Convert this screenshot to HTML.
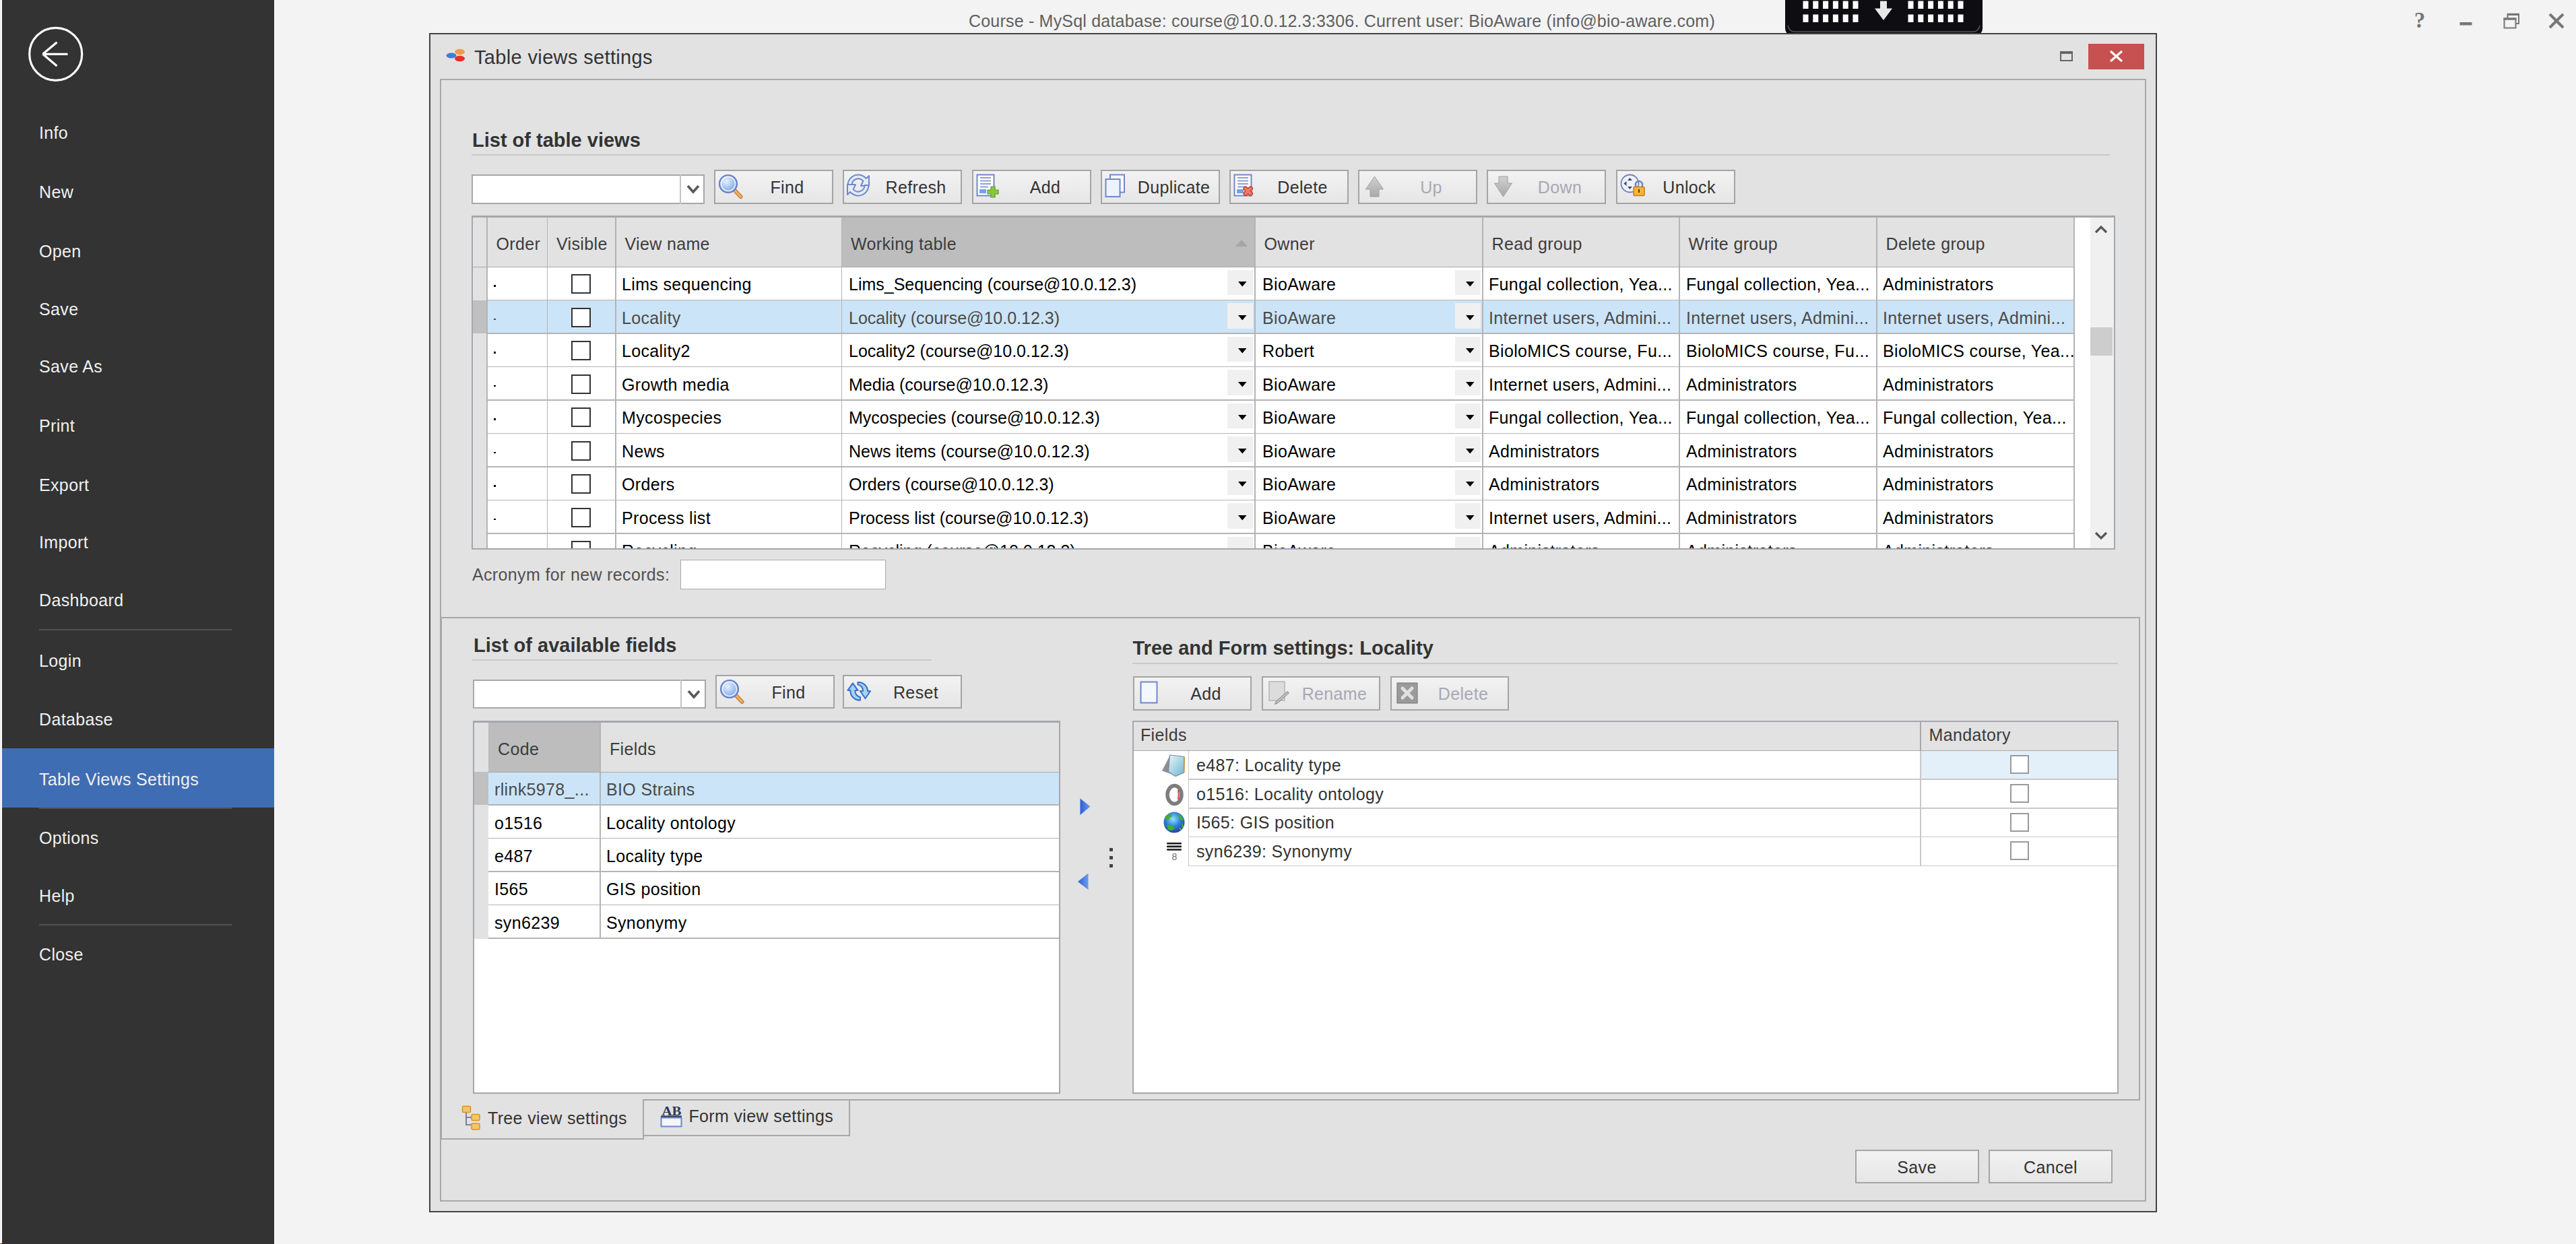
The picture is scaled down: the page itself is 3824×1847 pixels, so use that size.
<!DOCTYPE html><html><head><meta charset="utf-8"><style>
html,body{margin:0;padding:0;}
body{width:3824px;height:1847px;position:relative;overflow:hidden;background:#f3f3f3;font-family:"Liberation Sans", sans-serif;}
.t{position:absolute;white-space:nowrap;line-height:1;font-family:"Liberation Sans", sans-serif;letter-spacing:0.35px;}
</style></head><body>
<div style="position:absolute;left:3px;top:0px;width:404px;height:1847px;background:#333333"></div>
<svg style="position:absolute;left:38px;top:36px" width="90" height="90" viewBox="0 0 90 90"><circle cx="44.7" cy="44.3" r="39" fill="none" stroke="#fff" stroke-width="3.2"/><path d="M25.5 44.3 H62.5 M25.5 44.3 L46.5 26.7 M25.5 44.3 L46.5 61.9" fill="none" stroke="#fff" stroke-width="3.2" stroke-linecap="butt"/></svg>
<div style="position:absolute;left:3px;top:1111px;width:404px;height:88px;background:#3f6db4"></div>
<div class="t" style="left:58px;top:184.75px;font-size:25px;color:#f0f0f0;font-weight:normal;">Info</div>
<div class="t" style="left:58px;top:272.75px;font-size:25px;color:#f0f0f0;font-weight:normal;">New</div>
<div class="t" style="left:58px;top:360.75px;font-size:25px;color:#f0f0f0;font-weight:normal;">Open</div>
<div class="t" style="left:58px;top:446.75px;font-size:25px;color:#f0f0f0;font-weight:normal;">Save</div>
<div class="t" style="left:58px;top:531.75px;font-size:25px;color:#f0f0f0;font-weight:normal;">Save As</div>
<div class="t" style="left:58px;top:619.75px;font-size:25px;color:#f0f0f0;font-weight:normal;">Print</div>
<div class="t" style="left:58px;top:707.75px;font-size:25px;color:#f0f0f0;font-weight:normal;">Export</div>
<div class="t" style="left:58px;top:792.75px;font-size:25px;color:#f0f0f0;font-weight:normal;">Import</div>
<div class="t" style="left:58px;top:878.75px;font-size:25px;color:#f0f0f0;font-weight:normal;">Dashboard</div>
<div class="t" style="left:58px;top:968.75px;font-size:25px;color:#f0f0f0;font-weight:normal;">Login</div>
<div class="t" style="left:58px;top:1055.75px;font-size:25px;color:#f0f0f0;font-weight:normal;">Database</div>
<div class="t" style="left:58px;top:1144.75px;font-size:25px;color:#f0f0f0;font-weight:normal;">Table Views Settings</div>
<div class="t" style="left:58px;top:1231.75px;font-size:25px;color:#f0f0f0;font-weight:normal;">Options</div>
<div class="t" style="left:58px;top:1317.75px;font-size:25px;color:#f0f0f0;font-weight:normal;">Help</div>
<div class="t" style="left:58px;top:1404.75px;font-size:25px;color:#f0f0f0;font-weight:normal;">Close</div>
<div style="position:absolute;left:58px;top:934px;width:286px;height:2px;background:#505050"></div>
<div style="position:absolute;left:58px;top:1199px;width:286px;height:2px;background:#505050"></div>
<div style="position:absolute;left:58px;top:1372px;width:286px;height:2px;background:#505050"></div>
<div class="t" style="left:1438px;top:18.75px;font-size:25px;color:#606060;font-weight:normal;letter-spacing:0.2px">Course - MySql database: course@10.0.12.3:3306. Current user: BioAware (info@bio-aware.com)</div>
<svg style="position:absolute;left:2650px;top:0px" width="293" height="51" viewBox="0 0 293 51"><path d="M0 0 H293 V42 Q293 51 284 51 H9 Q0 51 0 42 Z" fill="#0e0e12"/><path d="M4 38 Q6 47 14 47 H279 Q287 47 289 38" fill="none" stroke="#55555c" stroke-width="1.5"/><rect x="26.5" y="1.5" width="8" height="11.5" fill="#fff"/><rect x="182.5" y="1.5" width="8" height="11.5" fill="#fff"/><rect x="41.3" y="1.5" width="8" height="11.5" fill="#fff"/><rect x="197.3" y="1.5" width="8" height="11.5" fill="#fff"/><rect x="56.1" y="1.5" width="8" height="11.5" fill="#fff"/><rect x="212.1" y="1.5" width="8" height="11.5" fill="#fff"/><rect x="70.9" y="1.5" width="8" height="11.5" fill="#fff"/><rect x="226.9" y="1.5" width="8" height="11.5" fill="#fff"/><rect x="85.7" y="1.5" width="8" height="11.5" fill="#fff"/><rect x="241.7" y="1.5" width="8" height="11.5" fill="#fff"/><rect x="100.5" y="1.5" width="8" height="11.5" fill="#fff"/><rect x="256.5" y="1.5" width="8" height="11.5" fill="#fff"/><rect x="26.5" y="21.5" width="8" height="11.5" fill="#fff"/><rect x="182.5" y="21.5" width="8" height="11.5" fill="#fff"/><rect x="41.3" y="21.5" width="8" height="11.5" fill="#fff"/><rect x="197.3" y="21.5" width="8" height="11.5" fill="#fff"/><rect x="56.1" y="21.5" width="8" height="11.5" fill="#fff"/><rect x="212.1" y="21.5" width="8" height="11.5" fill="#fff"/><rect x="70.9" y="21.5" width="8" height="11.5" fill="#fff"/><rect x="226.9" y="21.5" width="8" height="11.5" fill="#fff"/><rect x="85.7" y="21.5" width="8" height="11.5" fill="#fff"/><rect x="241.7" y="21.5" width="8" height="11.5" fill="#fff"/><rect x="100.5" y="21.5" width="8" height="11.5" fill="#fff"/><rect x="256.5" y="21.5" width="8" height="11.5" fill="#fff"/><path d="M141 1.5 H151 V12.5 H159 L146 30 L133 12.5 H141 Z" fill="#e8e8e8"/></svg>
<svg style="position:absolute;left:3578px;top:14px" width="240" height="34" viewBox="0 0 240 34"><text x="14" y="27" font-family="Liberation Serif" font-weight="bold" font-size="33" fill="#777" text-anchor="middle">?</text><rect x="73.5" y="19" width="18" height="4.5" fill="#777"/><rect x="144.5" y="7" width="16.5" height="14" fill="none" stroke="#777" stroke-width="2"/><rect x="144" y="5.8" width="17.5" height="3.2" fill="#777"/><rect x="139.5" y="13.5" width="17" height="14" fill="#f3f3f3" stroke="#777" stroke-width="2"/><rect x="138.5" y="12.5" width="19" height="3.2" fill="#777"/><path d="M207 7 L227 27 M227 7 L207 27" stroke="#777" stroke-width="4"/></svg>
<div style="position:absolute;left:636.5px;top:49px;width:2565.0px;height:1750.5px;background:#e2e2e2;border:2px solid #444;box-sizing:border-box"></div>
<svg style="position:absolute;left:660px;top:71px" width="34" height="24" viewBox="0 0 34 24"><ellipse cx="10" cy="11.5" rx="7.5" ry="4" fill="#3d7fd6"/><ellipse cx="22.5" cy="6" rx="7.5" ry="4.2" fill="#f39a4a"/><ellipse cx="22.5" cy="16" rx="7.5" ry="4.2" fill="#ee2a2a"/></svg>
<div class="t" style="left:704px;top:71.35px;font-size:29px;color:#333;font-weight:normal;">Table views settings</div>
<div style="position:absolute;left:3058px;top:76px;width:19px;height:15px;border:2px solid #666;border-top-width:4px;box-sizing:border-box"></div>
<div style="position:absolute;left:3100px;top:65px;width:83px;height:38px;background:#c75050"></div>
<svg style="position:absolute;left:3131px;top:74px" width="21" height="19" viewBox="0 0 21 19"><path d="M2 2 L19 17 M19 2 L2 17" stroke="#fff" stroke-width="3.2"/></svg>
<div style="position:absolute;left:652.5px;top:116.5px;width:2533.0px;height:1667.0px;border:2px solid #a8a8a8;box-sizing:border-box"></div>
<div class="t" style="left:701px;top:193.85px;font-size:29px;color:#333;font-weight:bold;letter-spacing:0px">List of table views</div>
<div style="position:absolute;left:700px;top:229px;width:2432px;height:2px;background:#c8c8c8"></div>
<div style="position:absolute;left:700px;top:259px;width:346px;height:44px;background:#fff;border:2px solid #a8a8a8;box-sizing:border-box"></div>
<div style="position:absolute;left:1009px;top:259px;width:1.5px;height:44px;background:#c4c4c4"></div>
<svg style="position:absolute;left:1018.5px;top:273.0px" width="20" height="16" viewBox="0 0 20 16"><path d="M2 3 L10 12 L18 3" fill="none" stroke="#5a5a5a" stroke-width="3.6"/></svg>
<div style="position:absolute;left:1060px;top:252px;width:177px;height:51px;background:linear-gradient(#f2f2f2,#e6e6e6);border:2px solid #a4a4a4;box-sizing:border-box"></div>
<svg style="position:absolute;left:1066px;top:258px" width="38" height="38" viewBox="0 0 38 38"><defs><radialGradient id="lg" cx="0.4" cy="0.35" r="0.7"><stop offset="0" stop-color="#e8f0ff"/><stop offset="1" stop-color="#6f9de6"/></radialGradient></defs><line x1="25" y1="25" x2="33.5" y2="34" stroke="#c9803a" stroke-width="6" stroke-linecap="round"/><line x1="25" y1="25" x2="33.5" y2="34" stroke="#f2b15e" stroke-width="3" stroke-linecap="round"/><circle cx="15" cy="15" r="13" fill="url(#lg)" stroke="#6b82c2" stroke-width="2.2"/><circle cx="15" cy="15" r="10.5" fill="none" stroke="#fff" stroke-width="1.6" opacity="0.8"/></svg>
<div class="t" style="left:668.5px;width:1000px;text-align:center;top:266.05px;font-size:25px;color:#333;font-weight:normal;">Find</div>
<div style="position:absolute;left:1251px;top:252px;width:177px;height:51px;background:linear-gradient(#f2f2f2,#e6e6e6);border:2px solid #a4a4a4;box-sizing:border-box"></div>
<svg style="position:absolute;left:1257px;top:258px" width="38" height="38" viewBox="0 0 38 38"><path d="M1.5 17 A15.5 15.5 0 0 1 28.9 7 L33 3 V18 H21 L24.3 10.9 A9.5 9.5 0 0 0 7.5 17 Z" fill="#e3ecf9" stroke="#7189c9" stroke-width="2" stroke-linejoin="round"/><path d="M32.5 17 A15.5 15.5 0 0 1 5.1 27 L1 31 V16 H13 L9.7 23.1 A9.5 9.5 0 0 0 26.5 17 Z" fill="#e3ecf9" stroke="#7189c9" stroke-width="2" stroke-linejoin="round"/></svg>
<div class="t" style="left:859.5px;width:1000px;text-align:center;top:266.05px;font-size:25px;color:#333;font-weight:normal;">Refresh</div>
<div style="position:absolute;left:1443px;top:252px;width:177px;height:51px;background:linear-gradient(#f2f2f2,#e6e6e6);border:2px solid #a4a4a4;box-sizing:border-box"></div>
<svg style="position:absolute;left:1449px;top:258px" width="38" height="38" viewBox="0 0 38 38"><rect x="1.5" y="1.5" width="25" height="31" fill="#fff" stroke="#7088c8" stroke-width="2"/><g stroke="#8da0d4" stroke-width="2"><line x1="6" y1="6" x2="22" y2="6"/><line x1="6" y1="10.5" x2="22" y2="10.5"/><line x1="6" y1="15" x2="22" y2="15"/><line x1="6" y1="19.5" x2="18" y2="19.5"/></g><rect x="5" y="23" width="10" height="6" fill="#6fa3e0"/><path d="M22 19 H28 V24 H33 V30 H28 V35 H22 V30 H17 V24 H22 Z" fill="#8cc63f" stroke="#5f9a2a" stroke-width="1.2"/></svg>
<div class="t" style="left:1051.5px;width:1000px;text-align:center;top:266.05px;font-size:25px;color:#333;font-weight:normal;">Add</div>
<div style="position:absolute;left:1634px;top:252px;width:177px;height:51px;background:linear-gradient(#f2f2f2,#e6e6e6);border:2px solid #a4a4a4;box-sizing:border-box"></div>
<svg style="position:absolute;left:1640px;top:258px" width="38" height="38" viewBox="0 0 38 38"><rect x="8" y="1.5" width="21" height="26" fill="#fff" stroke="#7088c8" stroke-width="2"/><rect x="1.5" y="8" width="21" height="26" fill="#eef3fb" stroke="#7088c8" stroke-width="2"/></svg>
<div class="t" style="left:1242.5px;width:1000px;text-align:center;top:266.05px;font-size:25px;color:#333;font-weight:normal;">Duplicate</div>
<div style="position:absolute;left:1825px;top:252px;width:177px;height:51px;background:linear-gradient(#f2f2f2,#e6e6e6);border:2px solid #a4a4a4;box-sizing:border-box"></div>
<svg style="position:absolute;left:1831px;top:258px" width="38" height="38" viewBox="0 0 38 38"><rect x="1.5" y="1.5" width="25" height="31" fill="#fff" stroke="#7088c8" stroke-width="2"/><g stroke="#8da0d4" stroke-width="2"><line x1="6" y1="6" x2="22" y2="6"/><line x1="6" y1="10.5" x2="22" y2="10.5"/><line x1="6" y1="15" x2="22" y2="15"/><line x1="6" y1="19.5" x2="18" y2="19.5"/></g><rect x="5" y="23" width="10" height="6" fill="#6fa3e0"/><path d="M18 22 L25.5 29.5 M25.5 22 L18 29.5" stroke="#c83c2c" stroke-width="7" stroke-linecap="round"/><path d="M18 22 L25.5 29.5 M25.5 22 L18 29.5" stroke="#f07a66" stroke-width="4" stroke-linecap="round"/></svg>
<div class="t" style="left:1433.5px;width:1000px;text-align:center;top:266.05px;font-size:25px;color:#333;font-weight:normal;">Delete</div>
<div style="position:absolute;left:2016px;top:252px;width:177px;height:51px;background:linear-gradient(#f2f2f2,#e6e6e6);border:2px solid #a4a4a4;box-sizing:border-box"></div>
<svg style="position:absolute;left:2027px;top:260.5px" width="38" height="38" viewBox="0 0 38 38"><defs><linearGradient id="gu" x1="0" x2="0" y1="0" y2="1"><stop offset="0" stop-color="#d0d0d0"/><stop offset="1" stop-color="#a9a9a9"/></linearGradient></defs><path d="M13.5 1 L26.5 20 H20 V31 H7 V20 H0.5 Z" fill="url(#gu)" stroke="#a0a0a0" stroke-width="1"/></svg>
<div class="t" style="left:1624.5px;width:1000px;text-align:center;top:266.05px;font-size:25px;color:#a8a8b4;font-weight:normal;">Up</div>
<div style="position:absolute;left:2207px;top:252px;width:177px;height:51px;background:linear-gradient(#f2f2f2,#e6e6e6);border:2px solid #a4a4a4;box-sizing:border-box"></div>
<svg style="position:absolute;left:2218px;top:260.5px" width="38" height="38" viewBox="0 0 38 38"><path d="M7 1 H20 V11 H26.5 L13.5 31 L0.5 11 H7 Z" fill="url(#gu)" stroke="#a0a0a0" stroke-width="1"/></svg>
<div class="t" style="left:1815.5px;width:1000px;text-align:center;top:266.05px;font-size:25px;color:#a8a8b4;font-weight:normal;">Down</div>
<div style="position:absolute;left:2399px;top:252px;width:177px;height:51px;background:linear-gradient(#f2f2f2,#e6e6e6);border:2px solid #a4a4a4;box-sizing:border-box"></div>
<svg style="position:absolute;left:2405px;top:258px" width="38" height="38" viewBox="0 0 38 38"><circle cx="14.5" cy="14.5" r="13" fill="#eef1f8" stroke="#6d82c0" stroke-width="1.8"/><path d="M14.5 6 L11 10 H18 Z M14.5 23 L11 19 H18 Z M5.5 14.5 L9.5 11 V18 Z" fill="#3b4a6a"/><path d="M23 20 V16 A5 5 0 0 1 33 16 V20" fill="none" stroke="#6d82c0" stroke-width="2.5"/><rect x="20" y="19.5" width="16" height="13" rx="1.5" fill="#f5b536" stroke="#c97a1a" stroke-width="1.5"/><rect x="27" y="23" width="2" height="5" fill="#5a3a10"/></svg>
<div class="t" style="left:2007.5px;width:1000px;text-align:center;top:266.05px;font-size:25px;color:#333;font-weight:normal;">Unlock</div>
<div style="position:absolute;left:700px;top:320px;width:2440px;height:496px;background:#fff"></div>
<div style="position:absolute;left:702px;top:323px;width:2376.5px;height:73px;background:#e2e2e2"></div>
<div style="position:absolute;left:1249.5px;top:323px;width:613.5px;height:73px;background:#bdbdbd"></div>
<div style="position:absolute;left:702px;top:396px;width:21px;height:418px;background:#e2e2e2"></div>
<div style="position:absolute;left:3102.5px;top:323px;width:35.5px;height:491px;background:#f0f0f0"></div>
<svg style="position:absolute;left:3107px;top:330px" width="24" height="20" viewBox="0 0 24 20"><path d="M4 15 L12 7 L20 15" fill="none" stroke="#555" stroke-width="3.2"/></svg>
<svg style="position:absolute;left:3107px;top:786px" width="24" height="20" viewBox="0 0 24 20"><path d="M4 5 L12 13 L20 5" fill="none" stroke="#555" stroke-width="3.2"/></svg>
<div style="position:absolute;left:3103px;top:485.5px;width:33px;height:42.5px;background:#cdcdcd"></div>
<div class="t" style="left:736.5px;top:349.75px;font-size:25px;color:#3c3c3c;font-weight:normal;">Order</div>
<div class="t" style="left:826.0px;top:349.75px;font-size:25px;color:#3c3c3c;font-weight:normal;">Visible</div>
<div class="t" style="left:927.5px;top:349.75px;font-size:25px;color:#3c3c3c;font-weight:normal;">View name</div>
<div class="t" style="left:1263.0px;top:349.75px;font-size:25px;color:#3c3c3c;font-weight:normal;">Working table</div>
<div class="t" style="left:1876.5px;top:349.75px;font-size:25px;color:#3c3c3c;font-weight:normal;">Owner</div>
<div class="t" style="left:2214.5px;top:349.75px;font-size:25px;color:#3c3c3c;font-weight:normal;">Read group</div>
<div class="t" style="left:2506.5px;top:349.75px;font-size:25px;color:#3c3c3c;font-weight:normal;">Write group</div>
<div class="t" style="left:2799.5px;top:349.75px;font-size:25px;color:#3c3c3c;font-weight:normal;">Delete group</div>
<svg style="position:absolute;left:1832px;top:354px" width="24" height="14" viewBox="0 0 24 14"><path d="M2 12 L11 2 L20 12 Z" fill="#a5a5a5"/></svg>
<div style="position:absolute;left:702px;top:396px;width:2400px;height:418px;overflow:hidden">
<div style="position:absolute;left:31px;top:27.0px;width:2.5px;height:2.5px;background:#000"></div>
<div style="position:absolute;left:146px;top:11.0px;width:29px;height:29.0px;border:2px solid #333;background:#fff;box-sizing:border-box"></div>
<div class="t" style="left:221px;top:14.25px;font-size:25px;color:#000">Lims sequencing</div>
<div class="t" style="left:558px;top:14.25px;font-size:25px;color:#000;letter-spacing:0px">Lims_Sequencing (course@10.0.12.3)</div>
<div class="t" style="left:1172px;top:14.25px;font-size:25px;color:#000">BioAware</div>
<div class="t" style="left:1508px;top:14.25px;font-size:25px;color:#000">Fungal collection, Yea...</div>
<div class="t" style="left:1801px;top:14.25px;font-size:25px;color:#000">Fungal collection, Yea...</div>
<div class="t" style="left:2093px;top:14.25px;font-size:25px;color:#000">Administrators</div>
<div style="position:absolute;left:1120px;top:4.5px;width:38px;height:37.5px;background:#f0f0f0"></div>
<svg style="position:absolute;left:1135.5px;top:22.0px" width="13" height="8"><path d="M0 0 H12.5 L6.25 7.5 Z" fill="#000"/></svg>
<div style="position:absolute;left:1458px;top:4.5px;width:38px;height:37.5px;background:#f0f0f0"></div>
<svg style="position:absolute;left:1473.5px;top:22.0px" width="13" height="8"><path d="M0 0 H12.5 L6.25 7.5 Z" fill="#000"/></svg>
<div style="position:absolute;left:21px;top:48.5px;width:2355.5px;height:1.5px;background:#b4b4b4"></div>
<div style="position:absolute;left:21px;top:49.5px;width:2355.5px;height:49.5px;background:#cce4f7"></div>
<div style="position:absolute;left:0px;top:49.5px;width:21px;height:49.5px;background:#c0c0c0"></div>
<div style="position:absolute;left:31px;top:76.5px;width:2.5px;height:2.5px;background:#4a4a4a"></div>
<div style="position:absolute;left:146px;top:60.5px;width:29px;height:29.0px;border:2px solid #333;background:#fff;box-sizing:border-box"></div>
<div class="t" style="left:221px;top:63.75px;font-size:25px;color:#4a4a4a">Locality</div>
<div class="t" style="left:558px;top:63.75px;font-size:25px;color:#4a4a4a;letter-spacing:0px">Locality (course@10.0.12.3)</div>
<div class="t" style="left:1172px;top:63.75px;font-size:25px;color:#4a4a4a">BioAware</div>
<div class="t" style="left:1508px;top:63.75px;font-size:25px;color:#4a4a4a">Internet users, Admini...</div>
<div class="t" style="left:1801px;top:63.75px;font-size:25px;color:#4a4a4a">Internet users, Admini...</div>
<div class="t" style="left:2093px;top:63.75px;font-size:25px;color:#4a4a4a">Internet users, Admini...</div>
<div style="position:absolute;left:1120px;top:54.0px;width:38px;height:37.5px;background:#f0f0f0"></div>
<svg style="position:absolute;left:1135.5px;top:71.5px" width="13" height="8"><path d="M0 0 H12.5 L6.25 7.5 Z" fill="#000"/></svg>
<div style="position:absolute;left:1458px;top:54.0px;width:38px;height:37.5px;background:#f0f0f0"></div>
<svg style="position:absolute;left:1473.5px;top:71.5px" width="13" height="8"><path d="M0 0 H12.5 L6.25 7.5 Z" fill="#000"/></svg>
<div style="position:absolute;left:21px;top:98.0px;width:2355.5px;height:1.5px;background:#b4b4b4"></div>
<div style="position:absolute;left:31px;top:126.0px;width:2.5px;height:2.5px;background:#000"></div>
<div style="position:absolute;left:146px;top:110.0px;width:29px;height:29.0px;border:2px solid #333;background:#fff;box-sizing:border-box"></div>
<div class="t" style="left:221px;top:113.25px;font-size:25px;color:#000">Locality2</div>
<div class="t" style="left:558px;top:113.25px;font-size:25px;color:#000;letter-spacing:0px">Locality2 (course@10.0.12.3)</div>
<div class="t" style="left:1172px;top:113.25px;font-size:25px;color:#000">Robert</div>
<div class="t" style="left:1508px;top:113.25px;font-size:25px;color:#000">BioloMICS course, Fu...</div>
<div class="t" style="left:1801px;top:113.25px;font-size:25px;color:#000">BioloMICS course, Fu...</div>
<div class="t" style="left:2093px;top:113.25px;font-size:25px;color:#000">BioloMICS course, Yea...</div>
<div style="position:absolute;left:1120px;top:103.5px;width:38px;height:37.5px;background:#f0f0f0"></div>
<svg style="position:absolute;left:1135.5px;top:121.0px" width="13" height="8"><path d="M0 0 H12.5 L6.25 7.5 Z" fill="#000"/></svg>
<div style="position:absolute;left:1458px;top:103.5px;width:38px;height:37.5px;background:#f0f0f0"></div>
<svg style="position:absolute;left:1473.5px;top:121.0px" width="13" height="8"><path d="M0 0 H12.5 L6.25 7.5 Z" fill="#000"/></svg>
<div style="position:absolute;left:21px;top:147.5px;width:2355.5px;height:1.5px;background:#b4b4b4"></div>
<div style="position:absolute;left:31px;top:175.5px;width:2.5px;height:2.5px;background:#000"></div>
<div style="position:absolute;left:146px;top:159.5px;width:29px;height:29.0px;border:2px solid #333;background:#fff;box-sizing:border-box"></div>
<div class="t" style="left:221px;top:162.75px;font-size:25px;color:#000">Growth media</div>
<div class="t" style="left:558px;top:162.75px;font-size:25px;color:#000;letter-spacing:0px">Media (course@10.0.12.3)</div>
<div class="t" style="left:1172px;top:162.75px;font-size:25px;color:#000">BioAware</div>
<div class="t" style="left:1508px;top:162.75px;font-size:25px;color:#000">Internet users, Admini...</div>
<div class="t" style="left:1801px;top:162.75px;font-size:25px;color:#000">Administrators</div>
<div class="t" style="left:2093px;top:162.75px;font-size:25px;color:#000">Administrators</div>
<div style="position:absolute;left:1120px;top:153.0px;width:38px;height:37.5px;background:#f0f0f0"></div>
<svg style="position:absolute;left:1135.5px;top:170.5px" width="13" height="8"><path d="M0 0 H12.5 L6.25 7.5 Z" fill="#000"/></svg>
<div style="position:absolute;left:1458px;top:153.0px;width:38px;height:37.5px;background:#f0f0f0"></div>
<svg style="position:absolute;left:1473.5px;top:170.5px" width="13" height="8"><path d="M0 0 H12.5 L6.25 7.5 Z" fill="#000"/></svg>
<div style="position:absolute;left:21px;top:197.0px;width:2355.5px;height:1.5px;background:#b4b4b4"></div>
<div style="position:absolute;left:31px;top:225.0px;width:2.5px;height:2.5px;background:#000"></div>
<div style="position:absolute;left:146px;top:209.0px;width:29px;height:29.0px;border:2px solid #333;background:#fff;box-sizing:border-box"></div>
<div class="t" style="left:221px;top:212.25px;font-size:25px;color:#000">Mycospecies</div>
<div class="t" style="left:558px;top:212.25px;font-size:25px;color:#000;letter-spacing:0px">Mycospecies (course@10.0.12.3)</div>
<div class="t" style="left:1172px;top:212.25px;font-size:25px;color:#000">BioAware</div>
<div class="t" style="left:1508px;top:212.25px;font-size:25px;color:#000">Fungal collection, Yea...</div>
<div class="t" style="left:1801px;top:212.25px;font-size:25px;color:#000">Fungal collection, Yea...</div>
<div class="t" style="left:2093px;top:212.25px;font-size:25px;color:#000">Fungal collection, Yea...</div>
<div style="position:absolute;left:1120px;top:202.5px;width:38px;height:37.5px;background:#f0f0f0"></div>
<svg style="position:absolute;left:1135.5px;top:220.0px" width="13" height="8"><path d="M0 0 H12.5 L6.25 7.5 Z" fill="#000"/></svg>
<div style="position:absolute;left:1458px;top:202.5px;width:38px;height:37.5px;background:#f0f0f0"></div>
<svg style="position:absolute;left:1473.5px;top:220.0px" width="13" height="8"><path d="M0 0 H12.5 L6.25 7.5 Z" fill="#000"/></svg>
<div style="position:absolute;left:21px;top:246.5px;width:2355.5px;height:1.5px;background:#b4b4b4"></div>
<div style="position:absolute;left:31px;top:274.5px;width:2.5px;height:2.5px;background:#000"></div>
<div style="position:absolute;left:146px;top:258.5px;width:29px;height:29.0px;border:2px solid #333;background:#fff;box-sizing:border-box"></div>
<div class="t" style="left:221px;top:261.75px;font-size:25px;color:#000">News</div>
<div class="t" style="left:558px;top:261.75px;font-size:25px;color:#000;letter-spacing:0px">News items (course@10.0.12.3)</div>
<div class="t" style="left:1172px;top:261.75px;font-size:25px;color:#000">BioAware</div>
<div class="t" style="left:1508px;top:261.75px;font-size:25px;color:#000">Administrators</div>
<div class="t" style="left:1801px;top:261.75px;font-size:25px;color:#000">Administrators</div>
<div class="t" style="left:2093px;top:261.75px;font-size:25px;color:#000">Administrators</div>
<div style="position:absolute;left:1120px;top:252.0px;width:38px;height:37.5px;background:#f0f0f0"></div>
<svg style="position:absolute;left:1135.5px;top:269.5px" width="13" height="8"><path d="M0 0 H12.5 L6.25 7.5 Z" fill="#000"/></svg>
<div style="position:absolute;left:1458px;top:252.0px;width:38px;height:37.5px;background:#f0f0f0"></div>
<svg style="position:absolute;left:1473.5px;top:269.5px" width="13" height="8"><path d="M0 0 H12.5 L6.25 7.5 Z" fill="#000"/></svg>
<div style="position:absolute;left:21px;top:296.0px;width:2355.5px;height:1.5px;background:#b4b4b4"></div>
<div style="position:absolute;left:31px;top:324.0px;width:2.5px;height:2.5px;background:#000"></div>
<div style="position:absolute;left:146px;top:308.0px;width:29px;height:29.0px;border:2px solid #333;background:#fff;box-sizing:border-box"></div>
<div class="t" style="left:221px;top:311.25px;font-size:25px;color:#000">Orders</div>
<div class="t" style="left:558px;top:311.25px;font-size:25px;color:#000;letter-spacing:0px">Orders (course@10.0.12.3)</div>
<div class="t" style="left:1172px;top:311.25px;font-size:25px;color:#000">BioAware</div>
<div class="t" style="left:1508px;top:311.25px;font-size:25px;color:#000">Administrators</div>
<div class="t" style="left:1801px;top:311.25px;font-size:25px;color:#000">Administrators</div>
<div class="t" style="left:2093px;top:311.25px;font-size:25px;color:#000">Administrators</div>
<div style="position:absolute;left:1120px;top:301.5px;width:38px;height:37.5px;background:#f0f0f0"></div>
<svg style="position:absolute;left:1135.5px;top:319.0px" width="13" height="8"><path d="M0 0 H12.5 L6.25 7.5 Z" fill="#000"/></svg>
<div style="position:absolute;left:1458px;top:301.5px;width:38px;height:37.5px;background:#f0f0f0"></div>
<svg style="position:absolute;left:1473.5px;top:319.0px" width="13" height="8"><path d="M0 0 H12.5 L6.25 7.5 Z" fill="#000"/></svg>
<div style="position:absolute;left:21px;top:345.5px;width:2355.5px;height:1.5px;background:#b4b4b4"></div>
<div style="position:absolute;left:31px;top:373.5px;width:2.5px;height:2.5px;background:#000"></div>
<div style="position:absolute;left:146px;top:357.5px;width:29px;height:29.0px;border:2px solid #333;background:#fff;box-sizing:border-box"></div>
<div class="t" style="left:221px;top:360.75px;font-size:25px;color:#000">Process list</div>
<div class="t" style="left:558px;top:360.75px;font-size:25px;color:#000;letter-spacing:0px">Process list (course@10.0.12.3)</div>
<div class="t" style="left:1172px;top:360.75px;font-size:25px;color:#000">BioAware</div>
<div class="t" style="left:1508px;top:360.75px;font-size:25px;color:#000">Internet users, Admini...</div>
<div class="t" style="left:1801px;top:360.75px;font-size:25px;color:#000">Administrators</div>
<div class="t" style="left:2093px;top:360.75px;font-size:25px;color:#000">Administrators</div>
<div style="position:absolute;left:1120px;top:351.0px;width:38px;height:37.5px;background:#f0f0f0"></div>
<svg style="position:absolute;left:1135.5px;top:368.5px" width="13" height="8"><path d="M0 0 H12.5 L6.25 7.5 Z" fill="#000"/></svg>
<div style="position:absolute;left:1458px;top:351.0px;width:38px;height:37.5px;background:#f0f0f0"></div>
<svg style="position:absolute;left:1473.5px;top:368.5px" width="13" height="8"><path d="M0 0 H12.5 L6.25 7.5 Z" fill="#000"/></svg>
<div style="position:absolute;left:21px;top:395.0px;width:2355.5px;height:1.5px;background:#b4b4b4"></div>
<div style="position:absolute;left:31px;top:423.0px;width:2.5px;height:2.5px;background:#000"></div>
<div style="position:absolute;left:146px;top:407.0px;width:29px;height:29.0px;border:2px solid #333;background:#fff;box-sizing:border-box"></div>
<div class="t" style="left:221px;top:410.25px;font-size:25px;color:#000">Recycling</div>
<div class="t" style="left:558px;top:410.25px;font-size:25px;color:#000;letter-spacing:0px">Recycling (course@10.0.12.3)</div>
<div class="t" style="left:1172px;top:410.25px;font-size:25px;color:#000">BioAware</div>
<div class="t" style="left:1508px;top:410.25px;font-size:25px;color:#000">Administrators</div>
<div class="t" style="left:1801px;top:410.25px;font-size:25px;color:#000">Administrators</div>
<div class="t" style="left:2093px;top:410.25px;font-size:25px;color:#000">Administrators</div>
<div style="position:absolute;left:1120px;top:400.5px;width:38px;height:37.5px;background:#f0f0f0"></div>
<svg style="position:absolute;left:1135.5px;top:418.0px" width="13" height="8"><path d="M0 0 H12.5 L6.25 7.5 Z" fill="#000"/></svg>
<div style="position:absolute;left:1458px;top:400.5px;width:38px;height:37.5px;background:#f0f0f0"></div>
<svg style="position:absolute;left:1473.5px;top:418.0px" width="13" height="8"><path d="M0 0 H12.5 L6.25 7.5 Z" fill="#000"/></svg>
<div style="position:absolute;left:21px;top:444.5px;width:2355.5px;height:1.5px;background:#b4b4b4"></div>
</div>
<div style="position:absolute;left:722.25px;top:323px;width:1.5px;height:491px;background:#b4b4b4"></div>
<div style="position:absolute;left:811.75px;top:323px;width:1.5px;height:491px;background:#b4b4b4"></div>
<div style="position:absolute;left:913.25px;top:323px;width:1.5px;height:491px;background:#b4b4b4"></div>
<div style="position:absolute;left:1248.75px;top:323px;width:1.5px;height:491px;background:#b4b4b4"></div>
<div style="position:absolute;left:1862.25px;top:323px;width:1.5px;height:491px;background:#b4b4b4"></div>
<div style="position:absolute;left:2200.25px;top:323px;width:1.5px;height:491px;background:#b4b4b4"></div>
<div style="position:absolute;left:2492.25px;top:323px;width:1.5px;height:491px;background:#b4b4b4"></div>
<div style="position:absolute;left:2785.25px;top:323px;width:1.5px;height:491px;background:#b4b4b4"></div>
<div style="position:absolute;left:3078px;top:323px;width:1.5px;height:491px;background:#b4b4b4"></div>
<div style="position:absolute;left:702px;top:395.5px;width:2376.5px;height:1.5px;background:#a8a8a8"></div>
<div style="position:absolute;left:700px;top:320px;width:2440px;height:496px;border:2px solid #a5a7ad;border-top-width:3px;box-sizing:border-box"></div>
<div class="t" style="left:701px;top:840.75px;font-size:25px;color:#505050;font-weight:normal;">Acronym for new records:</div>
<div style="position:absolute;left:1010px;top:831px;width:305px;height:44px;background:#fff;border:1.5px solid #a9a9a9;box-sizing:border-box"></div>
<div style="position:absolute;left:654px;top:915.5px;width:2522.5px;height:718.0px;border:2px solid #a8a8a8;box-sizing:border-box"></div>
<div class="t" style="left:703px;top:943.85px;font-size:29px;color:#333;font-weight:bold;letter-spacing:0px">List of available fields</div>
<div style="position:absolute;left:701px;top:978.5px;width:682px;height:2.0px;background:#c8c8c8"></div>
<div style="position:absolute;left:702px;top:1009px;width:346px;height:43px;background:#fff;border:2px solid #a8a8a8;box-sizing:border-box"></div>
<div style="position:absolute;left:1010px;top:1009px;width:1.5px;height:43px;background:#c4c4c4"></div>
<svg style="position:absolute;left:1020.0px;top:1022.5px" width="20" height="16" viewBox="0 0 20 16"><path d="M2 3 L10 12 L18 3" fill="none" stroke="#5a5a5a" stroke-width="3.6"/></svg>
<div style="position:absolute;left:1062px;top:1002px;width:177px;height:50px;background:linear-gradient(#f2f2f2,#e6e6e6);border:2px solid #a4a4a4;box-sizing:border-box"></div>
<svg style="position:absolute;left:1068px;top:1008px" width="38" height="38" viewBox="0 0 38 38"><defs><radialGradient id="lg" cx="0.4" cy="0.35" r="0.7"><stop offset="0" stop-color="#e8f0ff"/><stop offset="1" stop-color="#6f9de6"/></radialGradient></defs><line x1="25" y1="25" x2="33.5" y2="34" stroke="#c9803a" stroke-width="6" stroke-linecap="round"/><line x1="25" y1="25" x2="33.5" y2="34" stroke="#f2b15e" stroke-width="3" stroke-linecap="round"/><circle cx="15" cy="15" r="13" fill="url(#lg)" stroke="#6b82c2" stroke-width="2.2"/><circle cx="15" cy="15" r="10.5" fill="none" stroke="#fff" stroke-width="1.6" opacity="0.8"/></svg>
<div class="t" style="left:670.5px;width:1000px;text-align:center;top:1016.05px;font-size:25px;color:#333;font-weight:normal;">Find</div>
<div style="position:absolute;left:1251px;top:1002px;width:177px;height:50px;background:linear-gradient(#f2f2f2,#e6e6e6);border:2px solid #a4a4a4;box-sizing:border-box"></div>
<svg style="position:absolute;left:1257px;top:1012px" width="38" height="38" viewBox="0 0 38 38"><path d="M1.5 13 L9 2.5 L16.5 13 H12.5 A9 9 0 0 0 20 23 V27.5 A13.5 13.5 0 0 1 5.5 13 Z" fill="#a6d3f6" stroke="#3c74cc" stroke-width="2.2" stroke-linejoin="round"/><path d="M35 14 L27.5 25 L20 14 H24 A9 9 0 0 0 16.5 4.5 V1 A13.5 13.5 0 0 1 31 14 Z" fill="#a6d3f6" stroke="#3c74cc" stroke-width="2.2" stroke-linejoin="round"/></svg>
<div class="t" style="left:859.5px;width:1000px;text-align:center;top:1016.05px;font-size:25px;color:#333;font-weight:normal;">Reset</div>
<div style="position:absolute;left:702px;top:1069.5px;width:872px;height:554.0px;background:#fff;border:2px solid #a5a7ad;border-top-width:3px;box-sizing:border-box"></div>
<div style="position:absolute;left:704px;top:1072.5px;width:187px;height:73.5px;background:#bdbdbd"></div>
<div style="position:absolute;left:891px;top:1072.5px;width:681px;height:73.5px;background:#e2e2e2"></div>
<div style="position:absolute;left:704px;top:1072.5px;width:21px;height:73.5px;background:#e2e2e2"></div>
<div style="position:absolute;left:704px;top:1146px;width:21px;height:248px;background:#e2e2e2"></div>
<div class="t" style="left:739px;top:1099.75px;font-size:25px;color:#3c3c3c;font-weight:normal;">Code</div>
<div class="t" style="left:905px;top:1099.75px;font-size:25px;color:#3c3c3c;font-weight:normal;">Fields</div>
<div style="position:absolute;left:725px;top:1146.0px;width:847px;height:49.40000000000009px;background:#cce4f7"></div>
<div style="position:absolute;left:704px;top:1146.0px;width:21px;height:49.40000000000009px;background:#c0c0c0"></div>
<div class="t" style="left:734px;top:1160.25px;font-size:25px;color:#4a4a4a;font-weight:normal;">rlink5978_...</div>
<div class="t" style="left:900px;top:1160.25px;font-size:25px;color:#4a4a4a;font-weight:normal;">BIO Strains</div>
<div style="position:absolute;left:725px;top:1194.4px;width:847px;height:1.5px;background:#b4b4b4"></div>
<div class="t" style="left:734px;top:1209.65px;font-size:25px;color:#000;font-weight:normal;">o1516</div>
<div class="t" style="left:900px;top:1209.65px;font-size:25px;color:#000;font-weight:normal;">Locality ontology</div>
<div style="position:absolute;left:725px;top:1243.8000000000002px;width:847px;height:1.5px;background:#b4b4b4"></div>
<div class="t" style="left:734px;top:1259.05px;font-size:25px;color:#000;font-weight:normal;">e487</div>
<div class="t" style="left:900px;top:1259.05px;font-size:25px;color:#000;font-weight:normal;">Locality type</div>
<div style="position:absolute;left:725px;top:1293.2px;width:847px;height:1.5px;background:#b4b4b4"></div>
<div class="t" style="left:734px;top:1308.45px;font-size:25px;color:#000;font-weight:normal;">I565</div>
<div class="t" style="left:900px;top:1308.45px;font-size:25px;color:#000;font-weight:normal;">GIS position</div>
<div style="position:absolute;left:725px;top:1342.6000000000001px;width:847px;height:1.5px;background:#b4b4b4"></div>
<div class="t" style="left:734px;top:1357.85px;font-size:25px;color:#000;font-weight:normal;">syn6239</div>
<div class="t" style="left:900px;top:1357.85px;font-size:25px;color:#000;font-weight:normal;">Synonymy</div>
<div style="position:absolute;left:725px;top:1392.0px;width:847px;height:1.5px;background:#b4b4b4"></div>
<div style="position:absolute;left:890.25px;top:1072.5px;width:1.5px;height:321.5px;background:#b4b4b4"></div>
<div style="position:absolute;left:725px;top:1145.5px;width:847px;height:1.5px;background:#a8a8a8"></div>
<svg style="position:absolute;left:1600px;top:1183px" width="22" height="30" viewBox="0 0 22 30"><defs><linearGradient id="ag" x1="0" x2="1"><stop offset="0" stop-color="#2f5fd0"/><stop offset="1" stop-color="#6a9cf0"/></linearGradient></defs><path d="M3.5 2.5 L18.5 14.5 L3.5 27 Z" fill="url(#ag)"/></svg>
<svg style="position:absolute;left:1597px;top:1294px" width="22" height="30" viewBox="0 0 22 30"><path d="M18.5 2.5 L3 15 L18.5 27 Z" fill="url(#ag)"/></svg>
<div style="position:absolute;left:1646.5px;top:1259px;width:5.0px;height:5px;background:#444"></div>
<div style="position:absolute;left:1646.5px;top:1271px;width:5.0px;height:5px;background:#444"></div>
<div style="position:absolute;left:1646.5px;top:1283px;width:5.0px;height:5px;background:#444"></div>
<div class="t" style="left:1681.5px;top:948.35px;font-size:29px;color:#333;font-weight:bold;letter-spacing:0px">Tree and Form settings: Locality</div>
<div style="position:absolute;left:1681px;top:983.5px;width:1463px;height:2.0px;background:#c8c8c8"></div>
<div style="position:absolute;left:1681.5px;top:1004px;width:176.5px;height:50.5px;background:linear-gradient(#f2f2f2,#e6e6e6);border:2px solid #a4a4a4;box-sizing:border-box"></div>
<svg style="position:absolute;left:1692.0px;top:1010.5px" width="38" height="38" viewBox="0 0 38 38"><rect x="1.5" y="1.5" width="24" height="31" fill="#f4f7fd" stroke="#6f86cc" stroke-width="2"/></svg>
<div class="t" style="left:1290.0px;width:1000px;text-align:center;top:1018.05px;font-size:25px;color:#333;font-weight:normal;">Add</div>
<div style="position:absolute;left:1872.5px;top:1004px;width:176.5px;height:50.5px;background:linear-gradient(#f2f2f2,#e6e6e6);border:2px solid #a4a4a4;box-sizing:border-box"></div>
<svg style="position:absolute;left:1883.0px;top:1010.5px" width="38" height="38" viewBox="0 0 38 38"><rect x="1" y="1" width="23" height="28" fill="#dcdcdc" stroke="#b5b5b5" stroke-width="1.5"/><path d="M30 18 L13 33 L10 34 L11 31 L28 16 Z" fill="#d0d0d0" stroke="#9a9a9a" stroke-width="1.5"/></svg>
<div class="t" style="left:1481.0px;width:1000px;text-align:center;top:1018.05px;font-size:25px;color:#a8a8b4;font-weight:normal;">Rename</div>
<div style="position:absolute;left:2063.5px;top:1004px;width:176.5px;height:50.5px;background:linear-gradient(#f2f2f2,#e6e6e6);border:2px solid #a4a4a4;box-sizing:border-box"></div>
<svg style="position:absolute;left:2072.5px;top:1013px" width="38" height="38" viewBox="0 0 38 38"><rect x="1" y="1" width="30" height="30" fill="#9a9a9a" stroke="#808080" stroke-width="1.2"/><path d="M9 9 L23 23 M23 9 L9 23" stroke="#e0e0e0" stroke-width="5" stroke-linecap="round"/></svg>
<div class="t" style="left:1672.0px;width:1000px;text-align:center;top:1018.05px;font-size:25px;color:#a8a8b4;font-weight:normal;">Delete</div>
<div style="position:absolute;left:1681px;top:1069.5px;width:1464px;height:554.0px;background:#fff;border:2px solid #a5a7ad;box-sizing:border-box"></div>
<div style="position:absolute;left:1683px;top:1071.5px;width:1460px;height:43.0px;background:#e2e2e2"></div>
<div style="position:absolute;left:2850.25px;top:1071.5px;width:1.5px;height:43.0px;background:#a8a8a8"></div>
<div style="position:absolute;left:1683px;top:1113.5px;width:1460px;height:1.5px;background:#a8a8a8"></div>
<div class="t" style="left:1693px;top:1078.75px;font-size:25px;color:#3c3c3c;font-weight:normal;">Fields</div>
<div class="t" style="left:2863.5px;top:1078.75px;font-size:25px;color:#3c3c3c;font-weight:normal;">Mandatory</div>
<div style="position:absolute;left:2851px;top:1114.5px;width:292px;height:42.799999999999955px;background:#e3eff9"></div>
<div class="t" style="left:1776px;top:1123.75px;font-size:25px;color:#333;font-weight:normal;">e487: Locality type</div>
<div style="position:absolute;left:1765px;top:1156.3px;width:1378px;height:1.5px;background:#c8c8c8"></div>
<div style="position:absolute;left:2984px;top:1121.0px;width:28px;height:28.0px;border:2px solid #9a9a9a;background:#fff;box-sizing:border-box"></div>
<div class="t" style="left:1776px;top:1166.55px;font-size:25px;color:#333;font-weight:normal;">o1516: Locality ontology</div>
<div style="position:absolute;left:1765px;top:1199.1px;width:1378px;height:1.5px;background:#c8c8c8"></div>
<div style="position:absolute;left:2984px;top:1163.8px;width:28px;height:28.0px;border:2px solid #9a9a9a;background:#fff;box-sizing:border-box"></div>
<div class="t" style="left:1776px;top:1209.35px;font-size:25px;color:#333;font-weight:normal;">I565: GIS position</div>
<div style="position:absolute;left:1765px;top:1241.8999999999999px;width:1378px;height:1.5px;background:#c8c8c8"></div>
<div style="position:absolute;left:2984px;top:1206.6px;width:28px;height:28.0px;border:2px solid #9a9a9a;background:#fff;box-sizing:border-box"></div>
<div class="t" style="left:1776px;top:1252.15px;font-size:25px;color:#333;font-weight:normal;">syn6239: Synonymy</div>
<div style="position:absolute;left:1765px;top:1284.7px;width:1378px;height:1.5px;background:#c8c8c8"></div>
<div style="position:absolute;left:2984px;top:1249.4px;width:28px;height:28.0px;border:2px solid #9a9a9a;background:#fff;box-sizing:border-box"></div>
<div style="position:absolute;left:1763.75px;top:1114.5px;width:1.5px;height:171.5px;background:#c8c8c8"></div>
<div style="position:absolute;left:2850.25px;top:1114.5px;width:1.5px;height:171.5px;background:#c8c8c8"></div>
<svg style="position:absolute;left:1715px;top:1115px" width="50" height="170" viewBox="0 0 50 170"><defs><linearGradient id="np" x1="0" y1="0" x2="1" y2="1"><stop offset="0" stop-color="#e8f6fb"/><stop offset="1" stop-color="#6fb6d0"/></linearGradient><radialGradient id="gg" cx="0.45" cy="0.35" r="0.7"><stop offset="0" stop-color="#8fe4ff"/><stop offset="0.5" stop-color="#2f7fd8"/><stop offset="1" stop-color="#1a3fa0"/></radialGradient></defs><path d="M10 29.5 L21 8 L26 31 L29 36 Z" fill="#8d8f98"/><path d="M21.5 6 L43 8.5 L42.5 32 L30 37.5 L19.5 31 Z" fill="url(#np)" stroke="#7b8aa0" stroke-width="1.2"/><path d="M42 9 L44 10 L43.5 32 L41.5 33 Z" fill="#c8963a"/><ellipse cx="28.5" cy="65" rx="10.5" ry="13.5" fill="none" stroke="#7d7d7d" stroke-width="5.5"/><path d="M34 58 Q35.5 65 34 72" fill="none" stroke="#c0504d" stroke-width="2"/><circle cx="28" cy="106" r="15.5" fill="url(#gg)"/><path d="M14 98 Q19 92 25 95 Q23 101 17 103 Z M33 93 Q40 96 42 103 Q37 104 35 99 Z M17 110 Q24 108 29 114 Q26 120 19 117 Z M40 107 Q43 110 41 115 Q38 112 40 107 Z" fill="#3fae3a"/><path d="M21 100 L24 99 M36 115 L38 116" stroke="#f0b030" stroke-width="1.5"/><g fill="#1a1a1a"><rect x="17" y="136" width="22" height="2.6" rx="1"/><rect x="17" y="140.6" width="22" height="2.6" rx="1"/><rect x="17" y="145.2" width="22" height="2.6" rx="1"/></g><text x="28.5" y="162" font-family="Liberation Sans" font-size="14" fill="#707070" text-anchor="middle">8</text></svg>
<div style="position:absolute;left:654px;top:1631.5px;width:302px;height:60.0px;border:2px solid #a8a8a8;border-top:none;background:#e2e2e2;box-sizing:border-box"></div>
<div style="position:absolute;left:956px;top:1631.5px;width:305.5px;height:55.5px;border:2px solid #a8a8a8;border-left:none;border-top:none;box-sizing:border-box"></div>
<svg style="position:absolute;left:684px;top:1640px" width="32" height="42" viewBox="0 0 32 42"><path d="M8 10 V30 H17 M8 19 H17" fill="none" stroke="#5a6a90" stroke-width="1.6"/><rect x="2.5" y="2.5" width="12" height="9" rx="1.5" fill="#f7c467" stroke="#d99224" stroke-width="1.5"/><rect x="16" y="14.5" width="12" height="9" rx="1.5" fill="#f7c467" stroke="#d99224" stroke-width="1.5"/><rect x="16" y="28" width="12" height="9" rx="1.5" fill="#f7c467" stroke="#d99224" stroke-width="1.5"/></svg>
<div class="t" style="left:724px;top:1647.75px;font-size:25px;color:#333;font-weight:normal;">Tree view settings</div>
<svg style="position:absolute;left:979px;top:1640px" width="36" height="36" viewBox="0 0 36 36"><text x="18" y="15.5" font-family="Liberation Serif" font-weight="bold" font-size="19" fill="#2e3a5a" text-anchor="middle" textLength="29" lengthAdjust="spacingAndGlyphs">AB</text><rect x="2.5" y="19.5" width="30" height="13" fill="#f4f6fb" stroke="#6f86cc" stroke-width="2"/><rect x="2" y="16.5" width="31" height="2.2" fill="#2e3a5a"/></svg>
<div class="t" style="left:1022.5px;top:1645.25px;font-size:25px;color:#333;font-weight:normal;">Form view settings</div>
<div style="position:absolute;left:2754px;top:1706.5px;width:184px;height:50.0px;background:linear-gradient(#f2f2f2,#e6e6e6);border:2px solid #a4a4a4;box-sizing:border-box"></div>
<div class="t" style="left:2345.5px;width:1000px;text-align:center;top:1720.55px;font-size:25px;color:#333;font-weight:normal;">Save</div>
<div style="position:absolute;left:2952px;top:1706.5px;width:184px;height:50.0px;background:linear-gradient(#f2f2f2,#e6e6e6);border:2px solid #a4a4a4;box-sizing:border-box"></div>
<div class="t" style="left:2544px;width:1000px;text-align:center;top:1720.55px;font-size:25px;color:#333;font-weight:normal;">Cancel</div>
<div style="position:absolute;left:2px;top:0px;width:1px;height:1847px;background:#fff"></div>
<div style="position:absolute;left:0px;top:1846px;width:1px;height:1px;background:#f00"></div>
<div style="position:absolute;left:1px;top:1846px;width:1px;height:1px;background:#0f0"></div>
<div style="position:absolute;left:2px;top:1846px;width:1px;height:1px;background:#00f"></div>
</body></html>
